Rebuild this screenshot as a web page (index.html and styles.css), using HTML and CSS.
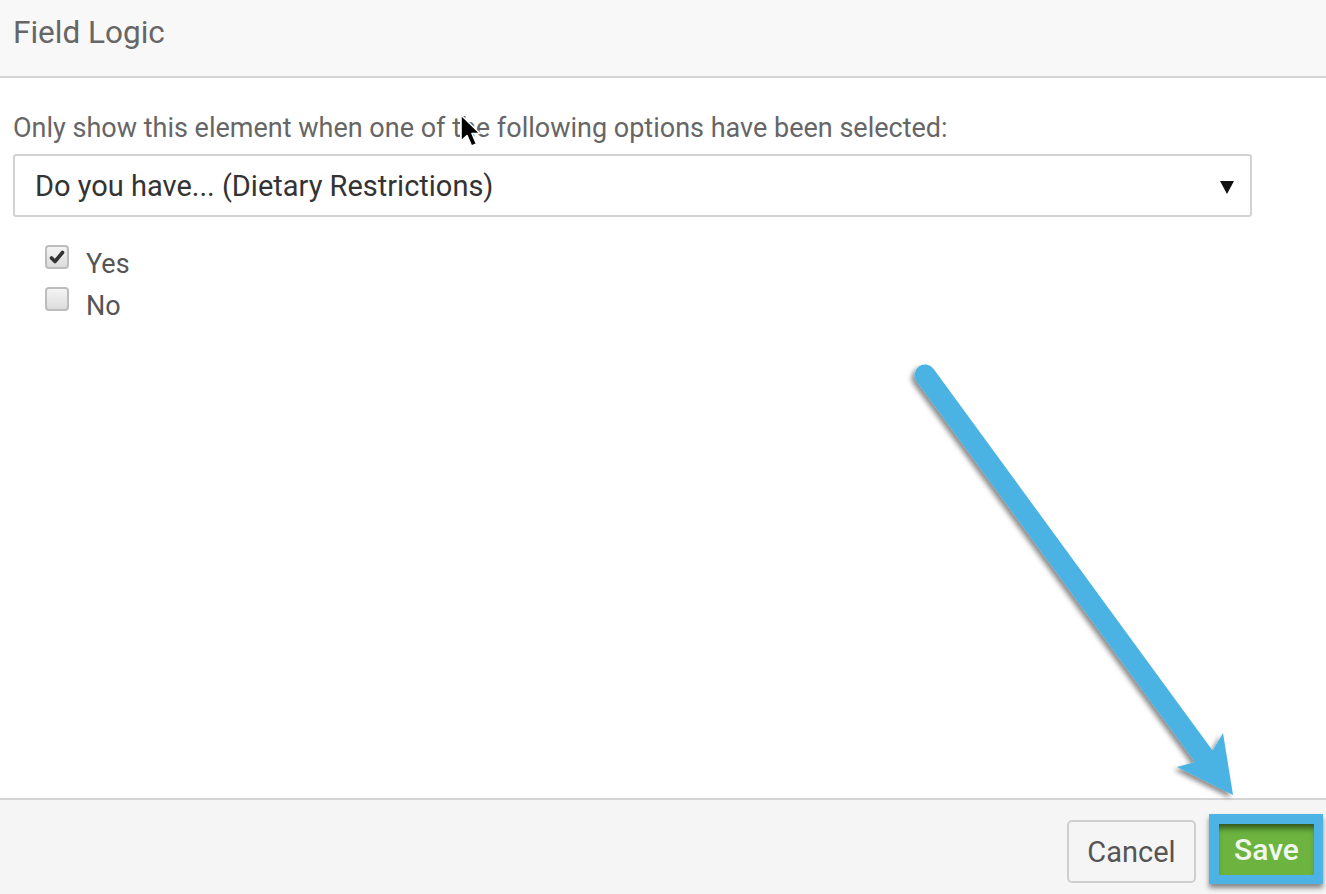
FILE: index.html
```html
<!DOCTYPE html>
<html>
<head>
<meta charset="utf-8">
<link rel="stylesheet" href="styles.css">
</head>
<body>
<div class="page">
  <header class="header">
    <h1 class="title">Field Logic</h1>
  </header>
  <main class="content">
    <p class="label">Only show this element when one of the following options have been selected:</p>
    <div class="select">
      <span class="select-text">Do you have... (Dietary Restrictions)</span>
      <svg class="caret" width="14" height="13" viewBox="0 0 14 13"><polygon points="0,0 14,0 7,13" fill="#111"/></svg>
    </div>
    <ul class="options">
      <li class="option">
        <span class="box checked">
          <svg width="16" height="14" viewBox="0 0 16 14"><path d="M2.5 8 L6 11.5 L13.5 2.5" fill="none" stroke="#333" stroke-width="3.6" stroke-linecap="round" stroke-linejoin="round"/></svg>
        </span>
        <span class="opt-label">Yes</span>
      </li>
      <li class="option">
        <span class="box"></span>
        <span class="opt-label">No</span>
      </li>
    </ul>
  </main>
  <footer class="footer">
    <button class="btn cancel">Cancel</button>
    <button class="btn save">Save</button>
  </footer>

  <svg class="overlay" width="1326" height="894" viewBox="0 0 1326 894">
    <defs>
      <filter id="sh" x="-20%" y="-20%" width="140%" height="140%">
        <feDropShadow dx="-3" dy="3" stdDeviation="2.5" flood-color="#000" flood-opacity="0.45"/>
      </filter>
    </defs>
    <g filter="url(#sh)" fill="#4cb3e4">
      <path d="M925 375 L1205 758" stroke="#4cb3e4" stroke-width="21" stroke-linecap="round"/>
      <polygon points="1177,767 1199,761 1213,750 1223,733 1233,795"/>
    </g>
    <g class="cursor">
      <path d="M461 115 L461 141 L467 135.5 L471.5 146 L476.5 144 L472 133.5 L480 133.5 Z" fill="#000" stroke="#fff" stroke-width="1.6" stroke-linejoin="round"/>
    </g>
  </svg>
</div>
</body>
</html>
```

FILE: styles.css
```css
* { box-sizing: border-box; }
html, body { margin: 0; padding: 0; }
body {
  width: 1326px;
  height: 894px;
  overflow: hidden;
  background: #fff;
  font-family: Roboto, "Liberation Sans", Arial, sans-serif;
}
.page {
  position: relative;
  width: 1326px;
  height: 894px;
  display: flex;
  flex-direction: column;
}
.header {
  height: 78px;
  background: #f8f8f8;
  border-bottom: 2px solid #d4d4d4;
  padding: 0 13px;
  display: flex;
  align-items: center;
}
.title {
  margin: 0 0 12px 0;
  font-size: 31.5px;
  font-weight: 400;
  color: #666;
}
.content {
  flex: 1;
  padding: 0 74px 0 13px;
}
.label {
  margin: 35px 0 0 0;
  font-size: 27px;
  line-height: 30px;
  color: #666;
}
.select {
  margin-top: 11px;
  height: 63px;
  border: 2px solid #d2d2d2;
  border-radius: 3px;
  display: flex;
  align-items: center;
  justify-content: space-between;
  padding: 0 16px 0 20px;
}
.select-text {
  font-size: 29px;
  color: #333;
}
.caret { margin-top: 3px; }
.options {
  list-style: none;
  margin: 28px 0 0 0;
  padding: 0 0 0 32px;
}
.option {
  display: flex;
  align-items: center;
  height: 24px;
  margin-bottom: 18px;
}
.box {
  width: 24px;
  height: 24px;
  border: 2px solid #bdbdbd;
  border-radius: 4px;
  background: linear-gradient(#f4f4f4, #dcdcdc);
  display: flex;
  align-items: center;
  justify-content: center;
}
.opt-label {
  margin-left: 17px;
  margin-top: 14px;
  font-size: 27px;
  color: #555;
}
.footer {
  height: 96px;
  background: #f5f5f5;
  border-top: 2px solid #d4d4d4;
  display: flex;
  justify-content: flex-end;
  align-items: flex-start;
  padding-right: 3px;
}
.btn {
  font-family: Roboto, "Liberation Sans", Arial, sans-serif;
  font-size: 29px;
  cursor: pointer;
}
.cancel {
  margin-top: 20px;
  width: 129px;
  height: 63px;
  background: #f5f5f5;
  border: 2px solid #cfcfcf;
  border-radius: 5px;
  color: #555;
}
.save {
  margin-top: 14px;
  margin-left: 13px;
  width: 114px;
  height: 70px;
  background: #6cb43f;
  border-style: solid;
  border-color: #4cb3e4;
  border-width: 10px 9px 9px 10px;
  color: #f2f7ee;
  font-size: 30px;
  font-weight: 500;
  padding: 0;
  box-shadow: inset 0 7px 6px -3px rgba(0,0,0,0.55), 0 4px 5px rgba(0,0,0,0.45);
}
.overlay {
  position: absolute;
  top: 0;
  left: 0;
  pointer-events: none;
}
```
